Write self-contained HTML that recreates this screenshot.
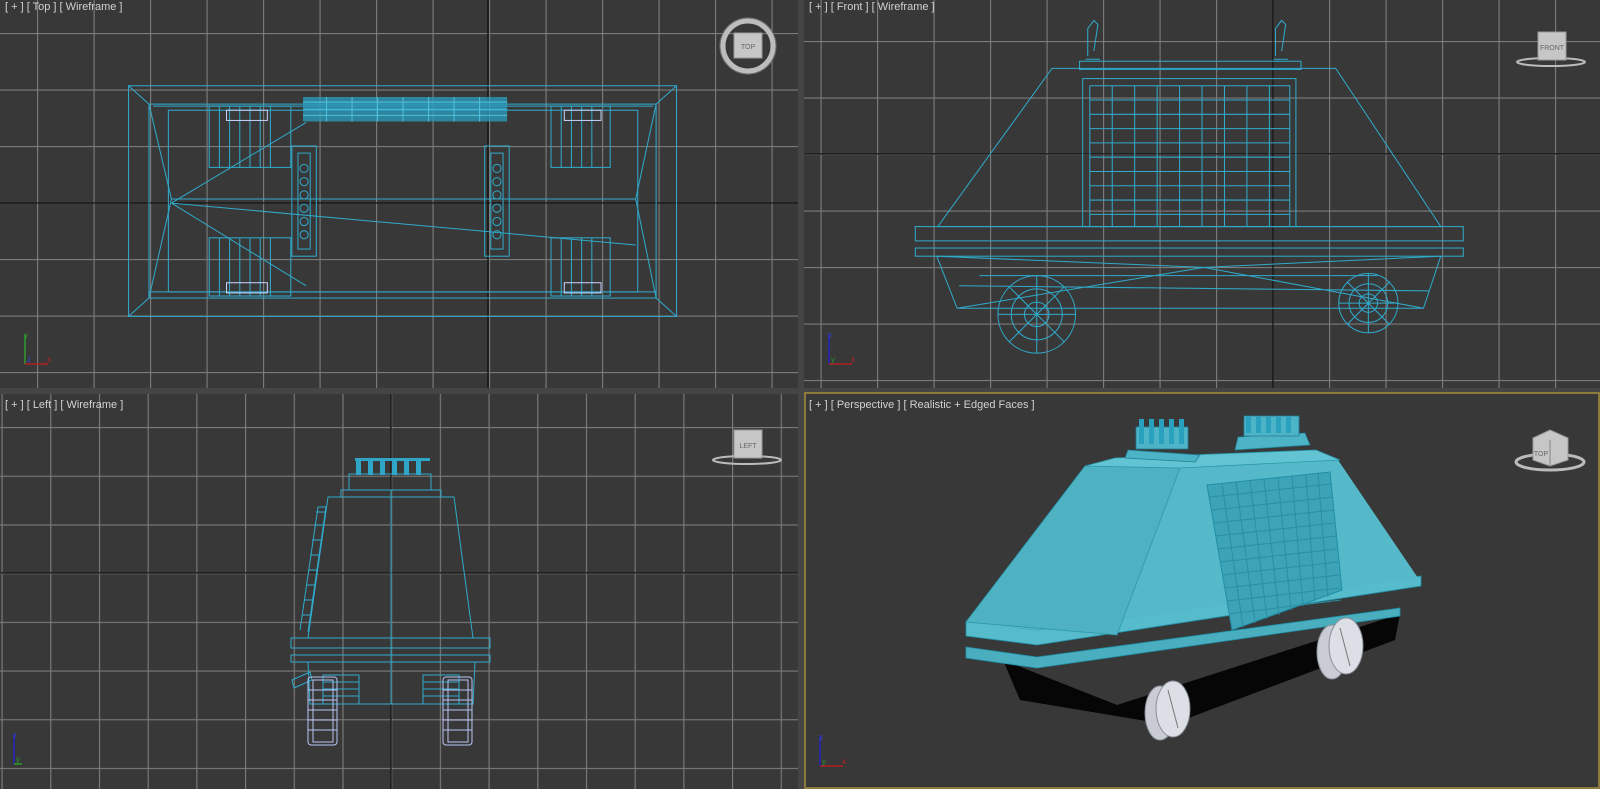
<!DOCTYPE html>
<html><head><meta charset="utf-8"><style>
html,body{margin:0;padding:0;background:#454545;width:1600px;height:789px;overflow:hidden}
svg{display:block}
text{font-family:"Liberation Sans",sans-serif}
</style></head><body>
<svg width="1600" height="789" viewBox="0 0 1600 789" xmlns="http://www.w3.org/2000/svg">
<defs>
<pattern id="g1" patternUnits="userSpaceOnUse" x="37" y="33" width="56.5" height="56.5"><path d="M0.5 0V56.5M0 0.5H56.5" stroke="#7a7a7a" stroke-width="1.3" fill="none"/></pattern>
<pattern id="g2" patternUnits="userSpaceOnUse" x="1442" y="41" width="56.5" height="56.5"><path d="M0.5 0V56.5M0 0.5H56.5" stroke="#7a7a7a" stroke-width="1.3" fill="none"/></pattern>
<pattern id="g3" patternUnits="userSpaceOnUse" x="245" y="427" width="48.7" height="48.7"><path d="M0.5 0V48.7M0 0.5H48.7" stroke="#7a7a7a" stroke-width="1.3" fill="none"/></pattern>
<clipPath id="c1"><rect x="0" y="0" width="798" height="388"/></clipPath>
<clipPath id="c2"><rect x="804" y="0" width="796" height="388"/></clipPath>
<clipPath id="c3"><rect x="0" y="394" width="798" height="395"/></clipPath>
<clipPath id="c4"><rect x="804" y="394" width="796" height="395"/></clipPath>
</defs>
<!-- viewports -->
<rect x="0" y="0" width="798" height="388" fill="#383838"/>
<rect x="0" y="0" width="798" height="388" fill="url(#g1)"/>
<rect x="804" y="0" width="796" height="388" fill="#383838"/>
<rect x="804" y="0" width="796" height="388" fill="url(#g2)"/>
<rect x="0" y="394" width="798" height="395" fill="#383838"/>
<rect x="0" y="394" width="798" height="395" fill="url(#g3)"/>
<rect x="805" y="393" width="794" height="395" fill="#383838" stroke="#8a7a3e" stroke-width="2"/>
<!-- axes -->
<g clip-path="url(#c1)"><line x1="488" y1="0" x2="488" y2="388" stroke="#111" stroke-width="1.3"/><line x1="0" y1="203" x2="798" y2="203" stroke="#111" stroke-width="1.3"/></g>
<g clip-path="url(#c2)"><line x1="1273" y1="0" x2="1273" y2="388" stroke="#111" stroke-width="1.3"/><line x1="804" y1="154" x2="1600" y2="154" stroke="#111" stroke-width="1.3"/></g>
<g clip-path="url(#c3)"><line x1="391" y1="394" x2="391" y2="789" stroke="#111" stroke-width="1.3"/><line x1="0" y1="573" x2="798" y2="573" stroke="#111" stroke-width="1.3"/></g>

<!-- labels -->
<g fill="#d2d2d2" font-size="11">
<text x="5" y="10">[ + ] [ Top ] [ Wireframe ]</text>
<text x="809" y="10">[ + ] [ Front ] [ Wireframe ]</text>
<text x="5" y="408">[ + ] [ Left ] [ Wireframe ]</text>
<text x="809" y="408">[ + ] [ Perspective ] [ Realistic + Edged Faces ]</text>
</g>

<!-- model drawings in preview coords -->
<g transform="scale(1.0204,1.0207)">
<!-- TOP view -->
<g fill="none" stroke="#30aacb" stroke-width="1">
<rect x="126" y="84" width="537" height="226"/>
<rect x="146" y="102" width="497" height="190"/>
<path d="M126 84L146 102M663 84L643 102M126 310L146 292M663 310L643 292"/>
<path d="M146 102L168 195L146 292M643 102L623 195L643 292M168 195L623 195M168 199L623 240M168 199L300 120M168 199L300 280"/>
<rect x="165" y="108" width="460" height="178"/>
<rect x="205" y="104" width="80" height="60"/><rect x="205" y="233" width="80" height="57"/>
<rect x="540" y="104" width="58" height="60"/><rect x="540" y="233" width="58" height="57"/>
<path d="M215 104V164M225 104V164M235 104V164M245 104V164M255 104V164M265 104V164M215 233V290M225 233V290M235 233V290M245 233V290M255 233V290M265 233V290M550 104V164M560 104V164M570 104V164M580 104V164M550 233V290M560 233V290M570 233V290M580 233V290"/>
<rect x="286" y="143" width="24" height="108"/><rect x="292" y="150" width="12" height="94"/>
<rect x="475" y="143" width="24" height="108"/><rect x="481" y="150" width="12" height="94"/>
<circle cx="298" cy="165" r="4"/><circle cx="298" cy="178" r="4"/><circle cx="298" cy="191" r="4"/><circle cx="298" cy="204" r="4"/><circle cx="298" cy="217" r="4"/><circle cx="298" cy="230" r="4"/>
<circle cx="487" cy="165" r="4"/><circle cx="487" cy="178" r="4"/><circle cx="487" cy="191" r="4"/><circle cx="487" cy="204" r="4"/><circle cx="487" cy="217" r="4"/><circle cx="487" cy="230" r="4"/>
<path d="M146 286L643 286M150 104L640 104"/>
</g>
<rect x="297" y="95" width="200" height="24" fill="#2a9fc0" opacity="0.75"/>
<path d="M297 100H497M297 107H497M297 113H497M320 95V119M345 95V119M370 95V119M395 95V119M420 95V119M445 95V119M470 95V119" stroke="#50c0de" stroke-width="1"/>
<rect x="222" y="108" width="40" height="10" fill="none" stroke="#c8d4ff"/><rect x="553" y="108" width="36" height="10" fill="none" stroke="#c8d4ff"/>
<rect x="222" y="277" width="40" height="10" fill="none" stroke="#c8d4ff"/><rect x="553" y="277" width="36" height="10" fill="none" stroke="#c8d4ff"/>

<!-- FRONT view -->
<g fill="none" stroke="#30aacb" stroke-width="1">
<path d="M1031 67H1309L1412 222H919Z"/>
<rect x="1058" y="60" width="217" height="8"/>
<rect x="897" y="222" width="537" height="14"/>
<rect x="897" y="243" width="537" height="8"/>
<path d="M918 251L938 302H1395L1412 251M918 251L1180 262L1412 251M938 302L1180 262L1395 302M960 270L1350 270M940 280L1400 285"/>
<circle cx="1016" cy="308" r="38"/><circle cx="1016" cy="308" r="25"/><circle cx="1016" cy="308" r="12"/>
<path d="M978 308H1054M1016 270V346M989 281L1043 335M1043 281L989 335"/>
<circle cx="1341" cy="297" r="29"/><circle cx="1341" cy="297" r="19"/><circle cx="1341" cy="297" r="9"/>
<path d="M1312 297H1370M1341 268V326M1320 276L1362 318M1362 276L1320 318"/>
<rect x="1061" y="77" width="209" height="145"/>
<path d="M1068 84H1264V222M1068 84V222"/>
<path d="M1068 98H1264M1068 112H1264M1068 126H1264M1068 140H1264M1068 154H1264M1068 168H1264M1068 182H1264M1068 196H1264M1068 210H1264M1090 84V222M1112 84V222M1134 84V222M1156 84V222M1178 84V222M1200 84V222M1222 84V222M1244 84V222"/>
<path d="M1066 55V28L1072 20L1076 24L1072 50M1064 58H1078M1250 55V28L1256 20L1260 24L1256 50M1248 58H1262"/>
</g>
<!-- LEFT view already in true coords: undo -->
</g>

<!-- LEFT view (true coords) -->
<g fill="none" stroke="#30aacb" stroke-width="1">
<rect x="349" y="474" width="82" height="16"/>
<rect x="341" y="490" width="100" height="7"/>
<path d="M328 497H454L473 638H308Z"/>
<line x1="391" y1="490" x2="391" y2="704"/>
<rect x="291" y="638" width="199" height="10"/>
<rect x="291" y="655" width="199" height="7"/>
<path d="M308 662L310 704H473L475 662"/>
<rect x="323" y="675" width="36" height="29"/><rect x="423" y="675" width="36" height="29"/>
<path d="M323 682H359M323 689H359M323 696H359M423 682H459M423 689H459M423 696H459"/>
<path d="M300 630L318 507L326 507L308 632M302 615H312M304 600H314M306 585H316M308 570H318M310 555H320M312 540H322M314 525H324M316 512H326"/>
<path d="M292 680L310 672L312 680L294 688Z"/>
</g>
<g fill="#2fa6c8">
<rect x="356" y="459" width="5" height="16"/><rect x="368" y="459" width="5" height="16"/><rect x="380" y="459" width="5" height="16"/><rect x="392" y="459" width="5" height="16"/><rect x="404" y="459" width="5" height="16"/><rect x="416" y="459" width="5" height="16"/>
<rect x="355" y="458" width="75" height="3"/>
</g>
<g fill="none" stroke="#b8c4f4" stroke-width="1">
<rect x="308" y="677" width="29" height="68" rx="3"/><rect x="313" y="680" width="20" height="62"/>
<path d="M308 690H337M308 700H337M308 710H337M308 720H337M308 730H337"/>
<rect x="443" y="677" width="29" height="68" rx="3"/><rect x="448" y="680" width="20" height="62"/>
<path d="M443 690H472M443 700H472M443 710H472M443 720H472M443 730H472"/>
</g>

<!-- PERSPECTIVE model -->
<g clip-path="url(#c4)">
<polygon points="1003,660 1117,705 1400,614 1395,640 1170,725 1020,700" fill="#060606"/>
<polygon points="966,647 1037,657 1400,608 1400,616 1037,668 966,658" fill="#4aaebe" stroke="#1f8fa6" stroke-width="0.8"/>
<polygon points="966,621 1037,630 1421,576 1421,586 1037,645 966,636" fill="#56bbcb" stroke="#1f8fa6" stroke-width="0.8"/>
<polygon points="1085,466 1338,460 1418,578 1037,630 966,622" fill="#55b9c9"/>
<polygon points="966,622 1085,466 1180,468 1117,635" fill="#4fb2c3" stroke="#2a98ae" stroke-width="0.8"/>
<polygon points="1085,466 1180,468 1340,460 1316,450 1115,458" fill="#62c4d2" stroke="#2a98ae" stroke-width="0.8"/>
<polygon points="1207,485 1330,472 1342,590 1232,630" fill="#3da3b6" stroke="#1f8fa6"/>
<g stroke="#2c8ea3" stroke-width="1" fill="none">
<path d="M1210 497L1331 484M1212 510L1333 497M1214 523L1334 510M1216 536L1335 523M1218 549L1336 536M1220 562L1337 549M1222 575L1338 562M1225 588L1339 575M1227 601L1340 588M1229 614L1341 600"/>
<path d="M1222 484L1243 627M1236 482L1255 623M1250 481L1267 619M1264 479L1279 615M1278 478L1291 610M1292 476L1303 606M1306 475L1315 601M1318 473L1328 597"/>
</g>
<g fill="#4cb4c6" stroke="#237f93" stroke-width="0.8">
<polygon points="1128,450 1200,455 1195,462 1125,458"/>
<rect x="1136" y="427" width="52" height="22"/>
<polygon points="1238,437 1305,433 1310,445 1235,450"/>
<rect x="1244" y="416" width="55" height="20"/>
</g>
<g fill="#2aa0bf"><rect x="1139" y="419" width="5" height="25"/><rect x="1149" y="419" width="5" height="25"/><rect x="1159" y="419" width="5" height="25"/><rect x="1169" y="419" width="5" height="25"/><rect x="1179" y="419" width="5" height="25"/>
<rect x="1246" y="417" width="5" height="16"/><rect x="1256" y="417" width="5" height="16"/><rect x="1266" y="417" width="5" height="16"/><rect x="1276" y="417" width="5" height="16"/><rect x="1286" y="417" width="5" height="16"/></g>
<g fill="#c9ccd4" stroke="#8b8f99" stroke-width="1">
<ellipse cx="1160" cy="713" rx="15" ry="27"/><ellipse cx="1173" cy="709" rx="17" ry="28" fill="#dcdfe5"/>
<ellipse cx="1332" cy="652" rx="15" ry="27"/><ellipse cx="1346" cy="646" rx="17" ry="28" fill="#dcdfe5"/>
</g>
<path d="M1168 690L1178 728M1340 628L1350 666" stroke="#777" stroke-width="1"/>
</g>

<!-- view cubes -->
<g>
<circle cx="748" cy="46" r="25" fill="none" stroke="#bdbdbd" stroke-width="5"/>
<circle cx="748" cy="46" r="28" fill="none" stroke="#777" stroke-width="1"/>
<rect x="734" y="33" width="28" height="25" fill="#c6c6c6" stroke="#999"/>
<text x="748" y="49" font-size="7" fill="#666" text-anchor="middle">TOP</text>
<ellipse cx="1551" cy="62" rx="34" ry="4" fill="none" stroke="#bbb" stroke-width="2"/>
<rect x="1538" y="32" width="28" height="28" fill="#c6c6c6" stroke="#999"/>
<text x="1552" y="50" font-size="7" fill="#666" text-anchor="middle">FRONT</text>
<ellipse cx="747" cy="460" rx="34" ry="4" fill="none" stroke="#bbb" stroke-width="2"/>
<rect x="734" y="430" width="28" height="28" fill="#c6c6c6" stroke="#999"/>
<text x="748" y="448" font-size="7" fill="#666" text-anchor="middle">LEFT</text>
<ellipse cx="1550" cy="462" rx="34" ry="8" fill="none" stroke="#bbb" stroke-width="3"/>
<polygon points="1533,438 1550,430 1568,438 1568,460 1550,466 1533,460" fill="#c6c6c6" stroke="#999"/>
<line x1="1550" y1="440" x2="1550" y2="466" stroke="#888"/>
<text x="1541" y="456" font-size="7" fill="#666" text-anchor="middle">TOP</text>
</g>

<!-- axis tripods -->
<g stroke-width="1.5" font-size="8">
<line x1="25" y1="364" x2="25" y2="334" stroke="#2d9a2d"/><line x1="25" y1="364" x2="48" y2="364" stroke="#b02020"/>
<text x="24" y="338" fill="#2d9a2d">y</text><text x="47" y="362" fill="#c02020">x</text><text x="27" y="362" fill="#3344cc">z</text>
<line x1="829" y1="364" x2="829" y2="334" stroke="#2222bb"/><line x1="829" y1="364" x2="852" y2="364" stroke="#b02020"/>
<text x="828" y="338" fill="#3344cc">z</text><text x="851" y="362" fill="#c02020">x</text><text x="831" y="362" fill="#2d9a2d">y</text>
<line x1="14" y1="764" x2="14" y2="734" stroke="#2222bb"/><line x1="14" y1="764" x2="22" y2="764" stroke="#2d9a2d"/>
<text x="13" y="738" fill="#3344cc">z</text><text x="16" y="762" fill="#2d9a2d">y</text>
<line x1="820" y1="766" x2="820" y2="736" stroke="#2222bb"/><line x1="820" y1="766" x2="843" y2="766" stroke="#b02020"/>
<text x="819" y="740" fill="#3344cc">z</text><text x="842" y="764" fill="#c02020">x</text><text x="822" y="764" fill="#2d9a2d">y</text>
</g>
</svg>
</body></html>
